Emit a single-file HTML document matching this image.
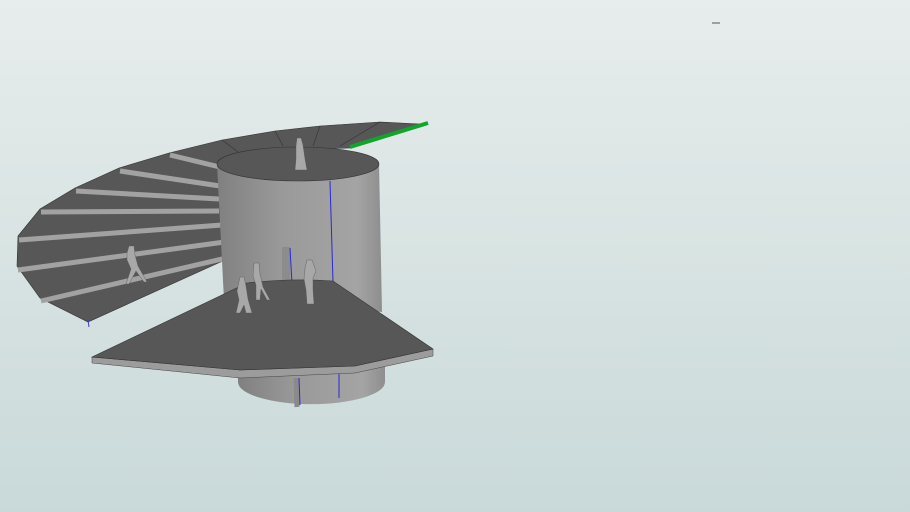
<!DOCTYPE html>
<html><head><style>
html,body{margin:0;padding:0;}
body{width:910px;height:512px;overflow:hidden;background:linear-gradient(#e7edec,#c9d9d9);}
svg{position:absolute;left:0;top:0}
</style></head><body>
<svg width="910" height="512" viewBox="0 0 910 512">
<defs>
<linearGradient id="cyl" x1="0" x2="1">
<stop offset="0" stop-color="#808080"/><stop offset="0.4" stop-color="#9a9a9a"/><stop offset="0.85" stop-color="#a4a4a4"/><stop offset="1" stop-color="#8e8e8e"/>
</linearGradient>
</defs>
<line x1="712" y1="23" x2="720" y2="23" stroke="#555" stroke-width="1"/>
<!-- lower cylinder -->
<path d="M238 372 L238 382 A73 22 0 0 0 385 382 L385 365 Z" fill="url(#cyl)"/>
<line x1="296" y1="378" x2="297" y2="407" stroke="#8a8a8a" stroke-width="5"/>
<line x1="299" y1="378" x2="300" y2="405" stroke="#2a2acc" stroke-width="1"/>
<line x1="339" y1="374" x2="339" y2="398" stroke="#2a2acc" stroke-width="1"/>
<!-- stair fan -->
<path d="M222 140 L275 131 L320 126 L380 122 L420 124 L350 148 L240 152 L220 175 L220 215 L232 240 L247 250 L88 322 L40 298 L17 266 L18 236 L40 209 L75 188 L119 168 L169 153 Z" fill="#575757" stroke="#333" stroke-width="0.6"/>
<g stroke="#a2a2a2" stroke-width="5" fill="none">
<line x1="170" y1="155" x2="228" y2="169"/>
<line x1="120" y1="171" x2="220" y2="186"/>
<line x1="76" y1="191" x2="219" y2="199"/>
<line x1="41" y1="212" x2="219" y2="211"/>
<line x1="19" y1="240" x2="222" y2="225"/>
<line x1="18" y1="270" x2="232" y2="241"/>
<line x1="41" y1="301" x2="248" y2="253"/>
</g>
<g stroke="#333" stroke-width="0.6" fill="none">
<line x1="222" y1="140" x2="238" y2="152"/>
<line x1="275" y1="131" x2="283" y2="146"/>
<line x1="320" y1="126" x2="313" y2="146"/>
<line x1="380" y1="122" x2="340" y2="146"/>
</g>
<line x1="350" y1="147" x2="428" y2="123" stroke="#11a52a" stroke-width="4"/>
<line x1="88" y1="320" x2="89" y2="327" stroke="#3a3acc" stroke-width="1"/>
<!-- upper cylinder -->
<path d="M217 163 L224 300 L382 312 L379 163 Z" fill="url(#cyl)"/>
<ellipse cx="298" cy="164" rx="81" ry="17" fill="#575757" stroke="#333" stroke-width="0.6"/>
<line x1="330" y1="181" x2="333" y2="282" stroke="#2a2acc" stroke-width="1"/>
<rect x="282" y="247" width="8" height="36" fill="#8c8c8c"/>
<line x1="290" y1="248" x2="292" y2="284" stroke="#2a2acc" stroke-width="1"/>
<!-- platform -->
<path d="M92 357 L92 363 L240 378 L355 373 L433 356 L433 349 L355 366 L240 370 Z" fill="#9c9c9c" stroke="#444" stroke-width="0.5"/>
<path d="M92 357 L247 283 Q290 278 333 281 L433 349 L355 366 L240 370 Z" fill="#575757" stroke="#333" stroke-width="0.6"/>
<!-- people -->
<g fill="#a8a8a8" stroke="#555" stroke-width="0.4">
<path d="M297 138 l4 0 l2 7 l2 14 l2 11 l-12 0 l1 -11 l0 -13 z"/>
<path d="M129 246 l5 0 l1 9 l3 11 l9 16 l-3 0 l-8 -11 l-7 13 l-3 0 l5 -15 l-4 -9 l0 -7 z"/>
<path d="M254 263 l5 0 l1 11 l3 13 l7 13 l-3 0 l-6 -11 l-1 11 l-4 0 l0 -15 l-3 -9 z"/>
<path d="M240 277 l4 0 l2 9 l2 13 l4 14 l-6 0 l-2 -8 l-4 8 l-4 0 l3 -13 l-2 -9 z"/>
<path d="M307 260 l5 0 l4 11 l-3 7 l0 12 l1 14 l-7 0 l-1 -14 l-2 -11 l1 -11 z"/>
</g>
</svg>
</body></html>
